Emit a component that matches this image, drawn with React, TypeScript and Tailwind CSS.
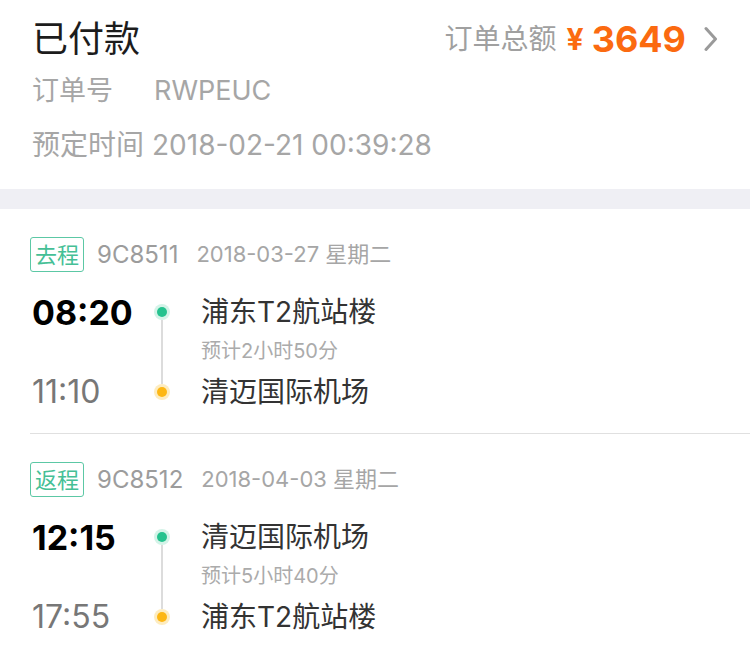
const FONT = { fontFamily: 'Inter, "Noto Sans CJK SC", sans-serif' }

type Leg = {
  tag: string
  flight: string
  date: string
  depTime: string
  depPlace: string
  duration: string
  arrTime: string
  arrPlace: string
}

const legs: Leg[] = [
  {
    tag: '去程',
    flight: '9C8511',
    date: '2018-03-27 星期二',
    depTime: '08:20',
    depPlace: '浦东T2航站楼',
    duration: '预计2小时50分',
    arrTime: '11:10',
    arrPlace: '清迈国际机场',
  },
  {
    tag: '返程',
    flight: '9C8512',
    date: '2018-04-03 星期二',
    depTime: '12:15',
    depPlace: '清迈国际机场',
    duration: '预计5小时40分',
    arrTime: '17:55',
    arrPlace: '浦东T2航站楼',
  },
]

function Dot({ color }: { color: 'green' | 'yellow' }) {
  return (
    <div
      className={
        color === 'green'
          ? 'flex h-[16px] w-[16px] items-center justify-center rounded-full bg-[#d4f3e8]'
          : 'flex h-[16px] w-[16px] items-center justify-center rounded-full bg-[#fdecc0]'
      }
    >
      <div
        className={
          color === 'green'
            ? 'h-[10px] w-[10px] rounded-full bg-[#25c28e]'
            : 'h-[10px] w-[10px] rounded-full bg-[#fdb714]'
        }
      />
    </div>
  )
}

function LegBlock({ leg }: { leg: Leg }) {
  return (
    <div className="pt-[28px] pb-[19px]">
      <div className="flex h-[35px] items-center pl-[30px]">
        <span className="flex h-[35px] items-center rounded-[3px] border-[1.5px] border-[#5cc8a5] px-[4px] text-[22px] leading-none text-[#45bf96]">
          {leg.tag}
        </span>
        <span className="ml-[13px] text-[24px] text-[#9c9c9c]">{leg.flight}</span>
        <span className="ml-[18px] text-[22px] text-[#a6a6a6]">{leg.date}</span>
      </div>

      <div className="mt-[20px] flex pl-[32px]">
        <div className="flex w-[114px] flex-col">
          <div className="flex h-[40px] items-center text-[34px] font-bold text-black">{leg.depTime}</div>
          <div className="h-[38px]" />
          <div className="flex h-[44px] items-center text-[32px] text-[#777]">{leg.arrTime}</div>
        </div>

        <div className="flex w-[32px] flex-col items-center pt-[12px] pb-[14px]">
          <Dot color="green" />
          <div className="w-[2px] flex-1 bg-[#dcdcdc]" />
          <Dot color="yellow" />
        </div>

        <div className="ml-[23px] flex flex-col">
          <div className="flex h-[40px] items-center text-[28px] text-[#333]">{leg.depPlace}</div>
          <div className="flex h-[38px] items-center text-[20px] text-[#ababab]">{leg.duration}</div>
          <div className="flex h-[44px] items-center text-[28px] text-[#333]">{leg.arrPlace}</div>
        </div>
      </div>
    </div>
  )
}

export default function App() {
  return (
    <div className="min-h-[651px] w-[750px] bg-white" style={FONT}>
      {/* Order header */}
      <div className="pt-[13px] pb-[18px] pl-[32px] pr-[32px]">
        <div className="flex h-[52px] items-center justify-between">
          <span className="text-[36px] text-[#1c1c1c]">已付款</span>
          <div className="flex items-center">
            <span className="text-[28px] text-[#a0a0a0]">订单总额</span>
            <span className="ml-[10px] text-[30px] font-bold text-[#fb6a10]">¥</span>
            <span className="ml-[8px] text-[36px] font-bold text-[#fb6a10]">3649</span>
            <svg className="ml-[18px]" width="14" height="26" viewBox="0 0 14 26" fill="none">
              <path d="M2 2.5 L11.5 13 L2 23.5" stroke="#9a9a9a" strokeWidth="3" strokeLinecap="round" strokeLinejoin="round" />
            </svg>
          </div>
        </div>
        <div className="flex h-[53px] items-center text-[27px] text-[#a6a6a6]">
          <span>订单号</span>
          <span className="ml-[41px]">RWPEUC</span>
        </div>
        <div className="flex h-[53px] items-center text-[28px] text-[#a6a6a6]">
          <span>预定时间</span>
          <span className="ml-[8px]">2018-02-21 00:39:28</span>
        </div>
      </div>

      <div className="h-[20px] bg-[#efeff4]" />

      {legs.map((leg, i) => (
        <div key={leg.flight}>
          {i > 0 && <div className="ml-[30px] h-px bg-[#e0e0e0]" />}
          <LegBlock leg={leg} />
        </div>
      ))}
    </div>
  )
}
